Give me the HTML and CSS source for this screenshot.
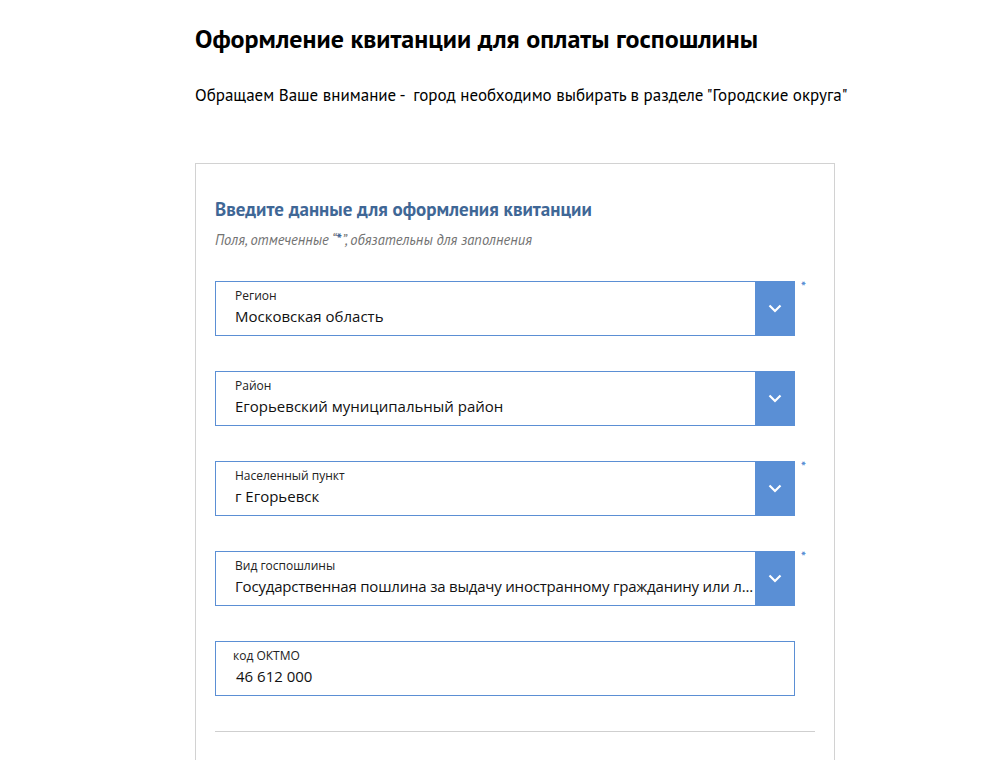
FILE: index.html
```html
<!DOCTYPE html>
<html lang="ru">
<head>
<meta charset="utf-8">
<link rel="stylesheet" href="styles.css">
</head>
<body>
<div class="page">
  <h1 class="title">Оформление квитанции для оплаты госпошлины</h1>
  <p class="notice">Обращаем Ваше внимание - &nbsp;город необходимо выбирать в разделе "Городские округа"</p>

  <div class="card">
    <h2 class="card-title">Введите данные для оформления квитанции</h2>
    <p class="hint">Поля, отмеченные “<span class="hint-star">*</span>”, обязательны для заполнения</p>

    <div class="row">
      <div class="field">
        <div class="field-body">
          <div class="label">Регион</div>
          <div class="value">Московская область</div>
        </div>
        <div class="btn"><svg width="14" height="9" viewBox="0 0 14 9"><path d="M1.5 1.5 L7 7 L12.5 1.5" fill="none" stroke="#fff" stroke-width="2.2"/></svg></div>
      </div>
      <span class="req">*</span>
    </div>

    <div class="row">
      <div class="field">
        <div class="field-body">
          <div class="label">Район</div>
          <div class="value">Егорьевский муниципальный район</div>
        </div>
        <div class="btn"><svg width="14" height="9" viewBox="0 0 14 9"><path d="M1.5 1.5 L7 7 L12.5 1.5" fill="none" stroke="#fff" stroke-width="2.2"/></svg></div>
      </div>
      <span class="req"></span>
    </div>

    <div class="row">
      <div class="field">
        <div class="field-body">
          <div class="label">Населенный пункт</div>
          <div class="value">г Егорьевск</div>
        </div>
        <div class="btn"><svg width="14" height="9" viewBox="0 0 14 9"><path d="M1.5 1.5 L7 7 L12.5 1.5" fill="none" stroke="#fff" stroke-width="2.2"/></svg></div>
      </div>
      <span class="req">*</span>
    </div>

    <div class="row">
      <div class="field">
        <div class="field-body">
          <div class="label">Вид госпошлины</div>
          <div class="value value-long">Государственная пошлина за выдачу иностранному гражданину или л...</div>
        </div>
        <div class="btn"><svg width="14" height="9" viewBox="0 0 14 9"><path d="M1.5 1.5 L7 7 L12.5 1.5" fill="none" stroke="#fff" stroke-width="2.2"/></svg></div>
      </div>
      <span class="req">*</span>
    </div>

    <div class="row">
      <div class="field field-input">
        <div class="field-body">
          <div class="label label-input">код ОКТМО</div>
          <div class="value value-input">46 612 000</div>
        </div>
      </div>
      <span class="req"></span>
    </div>

    <hr class="divider">
  </div>
</div>
</body>
</html>
```

FILE: styles.css
```css
html, body {
  margin: 0;
  padding: 0;
  background: #fff;
}
body {
  font-family: "PT Sans", Roboto, "Noto Sans", sans-serif;
  color: #000;
}
.page {
  padding: 23px 0 0 195px;
  width: 640px;
}
.title {
  margin: 0;
  font-size: 26px;
  line-height: 32px;
  font-weight: 700;
  white-space: nowrap;
}
.notice {
  margin: 29px 0 0;
  font-size: 17px;
  line-height: 22px;
  white-space: nowrap;
}
.card {
  margin-top: 57px;
  border: 1px solid #d2d2d2;
  border-bottom: none;
  padding: 33px 19px 40px;
  height: 600px;
  box-sizing: border-box;
}
.card-title {
  margin: 0;
  font-size: 19px;
  line-height: 24px;
  font-weight: 700;
  color: #3f6796;
}
.hint {
  margin: 10px 0 0;
  font-size: 14.5px;
  line-height: 18px;
  font-style: italic;
  color: #737373;
}
.hint-star {
  color: #3f6796;
  font-style: normal;
  font-weight: 700;
}
.row {
  display: flex;
  align-items: flex-start;
  margin-top: 35px;
}
.hint + .row {
  margin-top: 32px;
}
.field {
  width: 580px;
  height: 55px;
  box-sizing: border-box;
  border: 1px solid #5b8fd4;
  display: flex;
}
.field-body {
  flex: 1;
  min-width: 0;
  padding: 6px 0 0 19px;
}
.label {
  font-family: "Open Sans", "Noto Sans", sans-serif;
  font-size: 12px;
  line-height: 16px;
  color: #222;
}
.value {
  font-family: "Open Sans", "Noto Sans", sans-serif;
  font-size: 15px;
  line-height: 24px;
  color: #111;
  white-space: nowrap;
}
.value-long {
  letter-spacing: -0.2px;
}
.label-input {
  margin-left: -2px;
}
.value-input {
  margin-left: 1px;
}
.btn {
  width: 40px;
  margin: -1px -1px -1px 0;
  background: #5a8fd5;
  display: flex;
  align-items: center;
  justify-content: center;
}
.req {
  width: 12px;
  margin-left: 6px;
  margin-top: -2px;
  color: #5a8fd5;
  font-size: 13px;
  font-weight: 700;
  line-height: 16px;
}
.divider {
  margin: 35px 0 0;
  width: 600px;
  border: none;
  border-top: 1px solid #cfcfcf;
  height: 0;
}
```
